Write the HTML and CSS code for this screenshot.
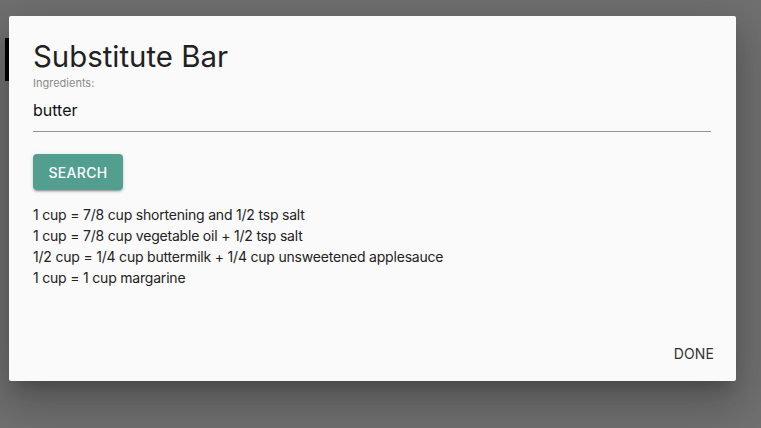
FILE: index.html
```html
<!DOCTYPE html>
<html>
<head>
<meta charset="utf-8">
<link rel="stylesheet" href="styles.css">
</head>
<body>
<div class="page">
  <div class="page-mark"></div>
</div>
<div class="backdrop">
  <div class="dialog">
    <h2 class="title">Substitute Bar</h2>
    <div class="field">
      <div class="label">Ingredients:</div>
      <div class="input">butter</div>
    </div>
    <div class="actions-top">
      <button class="search">SEARCH</button>
    </div>
    <div class="results">
      <div>1 cup = 7/8 cup shortening and 1/2 tsp salt</div>
      <div>1 cup = 7/8 cup vegetable oil + 1/2 tsp salt</div>
      <div>1/2 cup = 1/4 cup buttermilk + 1/4 cup unsweetened applesauce</div>
      <div>1 cup = 1 cup margarine</div>
    </div>
    <div class="footer">
      <button class="done">DONE</button>
    </div>
  </div>
</div>
</body>
</html>
```
FILE: styles.css
```css
html, body {
  margin: 0;
  padding: 0;
  width: 761px;
  height: 428px;
  overflow: hidden;
  font-family: Inter, Roboto, "Liberation Sans", sans-serif;
}
.page {
  width: 761px;
  height: 428px;
  background: #ffffff;
  padding-top: 38px;
  padding-left: 5px;
  box-sizing: border-box;
}
.page-mark {
  width: 5px;
  height: 43px;
  background: #000;
}
.backdrop {
  position: absolute;
  left: 0;
  top: 0;
  width: 761px;
  height: 428px;
  background: rgba(0, 0, 0, 0.56);
  padding: 16px 0 0 9px;
  box-sizing: border-box;
}
.dialog {
  width: 727px;
  height: 365px;
  background: #fafafa;
  border-radius: 2px;
  box-shadow: 0 11px 15px -7px rgba(0,0,0,0.2), 0 24px 38px 3px rgba(0,0,0,0.14), 0 9px 46px 8px rgba(0,0,0,0.12);
  box-sizing: border-box;
  padding: 23px 24px 0 24px;
  display: flex;
  flex-direction: column;
}
.title {
  margin: 0;
  font-size: 29.4px;
  font-weight: 400;
  line-height: 35px;
  color: #212121;
}
.field {
  margin-top: 3px;
}
.label {
  font-size: 11px;
  line-height: 13px;
  color: #8a8a8a;
}
.input {
  margin-top: 11px;
  font-size: 16px;
  line-height: 19px;
  color: #111;
  padding-bottom: 11px;
  border-bottom: 1px solid #949494;
  margin-right: 1px;
}
.actions-top {
  margin-top: 22px;
}
.search {
  width: 90px;
  height: 36px;
  border: none;
  border-radius: 4px;
  background: #529e8f;
  color: #fff;
  font-family: Inter, Roboto, "Liberation Sans", sans-serif;
  font-size: 14px;
  font-weight: 500;
  letter-spacing: 0.3px;
  padding: 0;
  box-shadow: 0 3px 1px -2px rgba(0,0,0,0.2), 0 2px 2px 0 rgba(0,0,0,0.14), 0 1px 5px 0 rgba(0,0,0,0.12);
}
.results {
  margin-top: 14px;
  font-size: 14px;
  line-height: 21px;
  color: #222;
  letter-spacing: -0.2px;
}
.footer {
  margin-top: auto;
  display: flex;
  justify-content: flex-end;
  padding-bottom: 17px;
  margin-right: -2px;
}
.done {
  border: none;
  background: transparent;
  font-family: Inter, Roboto, "Liberation Sans", sans-serif;
  font-size: 14px;
  font-weight: 400;
  color: #333;
  letter-spacing: 0.1px;
  padding: 0;
  line-height: 20px;
}
```
